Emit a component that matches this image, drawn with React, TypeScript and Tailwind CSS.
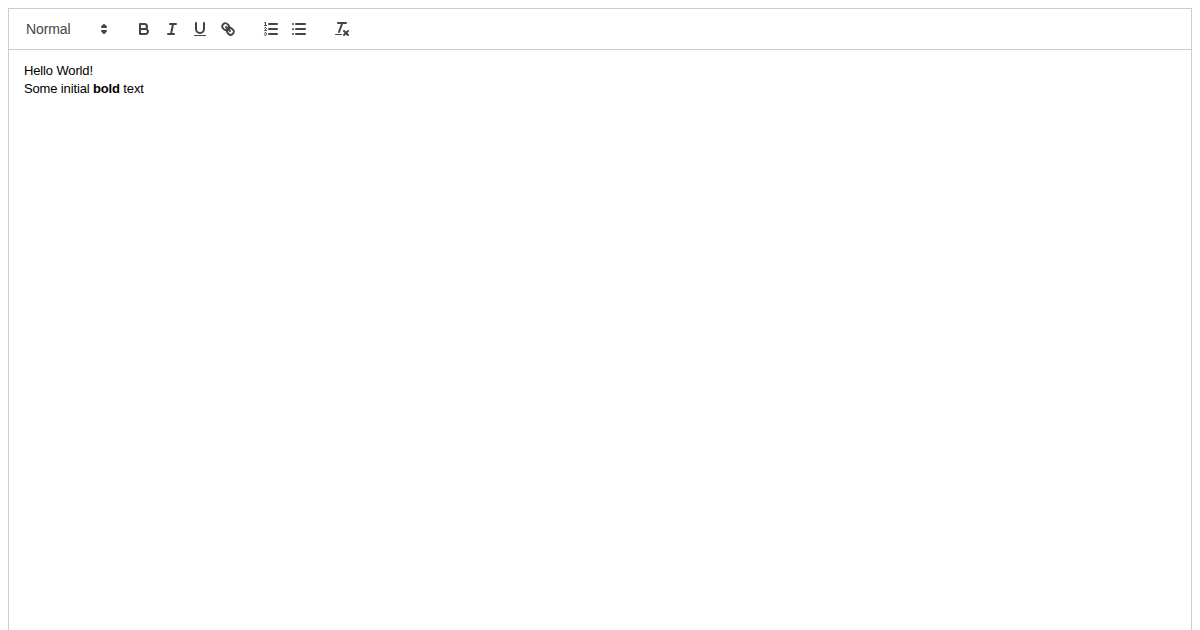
const stroke = {
  fill: 'none',
  stroke: '#444',
  strokeWidth: 2,
  strokeLinecap: 'round' as const,
  strokeLinejoin: 'round' as const,
};
const thin = { ...stroke, strokeWidth: 1 };

const ToolButton = ({ children }: { children: React.ReactNode }) => (
  <button className="w-[28px] h-[24px] px-[5px] py-[3px] flex items-center justify-center">
    <svg viewBox="0 0 18 18" className="w-[18px] h-[18px]">
      {children}
    </svg>
  </button>
);

const App = () => {
  return (
    <div className="p-2 bg-white min-h-screen" style={{ fontFamily: '"Liberation Sans", Helvetica, Arial, sans-serif' }}>
      <div className="border border-[#ccc] flex flex-col">
        {/* Toolbar */}
        <div className="flex items-center p-2 border-b border-[#ccc]">
          <div className="w-[98px] h-[24px] mr-[15px] relative text-[14px] font-medium text-[#444] tracking-[-0.1px]">
            <span className="absolute left-0 top-0 h-[24px] pl-[9px] leading-[24px]">Normal</span>
            <svg viewBox="0 0 18 18" className="absolute right-[2px] top-[3px] w-[18px] h-[18px]">
              <polygon points="7 11 9 13 11 11 7 11" {...stroke} />
              <polygon points="7 7 9 5 11 7 7 7" {...stroke} />
            </svg>
          </div>

          <div className="flex mr-[15px]">
            <ToolButton>
              <path {...stroke} d="M5,4H9.5A2.5,2.5,0,0,1,12,6.5v0A2.5,2.5,0,0,1,9.5,9H5A0,0,0,0,1,5,9V4A0,0,0,0,1,5,4Z" />
              <path {...stroke} d="M5,9h5.5A2.5,2.5,0,0,1,13,11.5v0A2.5,2.5,0,0,1,10.5,14H5a0,0,0,0,1,0,0V9A0,0,0,0,1,5,9Z" />
            </ToolButton>
            <ToolButton>
              <line {...stroke} x1="7" x2="13" y1="4" y2="4" />
              <line {...stroke} x1="5" x2="11" y1="14" y2="14" />
              <line {...stroke} x1="8" x2="10" y1="14" y2="4" />
            </ToolButton>
            <ToolButton>
              <path {...stroke} d="M5,3V9a4.012,4.012,0,0,0,4,4H9a4.012,4.012,0,0,0,4-4V3" />
              <rect fill="#444" height="1" rx="0.5" ry="0.5" width="12" x="3" y="15" />
            </ToolButton>
            <ToolButton>
              <line {...stroke} x1="7" x2="11" y1="7" y2="11" />
              <path {...stroke} d="M8.9,4.577a3.476,3.476,0,0,1,.36,4.679A3.476,3.476,0,0,1,4.577,8.9C3.185,7.5,2.035,6.4,4.217,4.217S7.5,3.185,8.9,4.577Z" />
              <path {...stroke} d="M13.423,9.1a3.476,3.476,0,0,0-4.679-.36,3.476,3.476,0,0,0,.36,4.679c1.392,1.392,2.5,2.542,4.679.36S14.815,10.5,13.423,9.1Z" />
            </ToolButton>
          </div>

          <div className="flex mr-[15px]">
            <ToolButton>
              <line {...stroke} x1="7" x2="15" y1="4" y2="4" />
              <line {...stroke} x1="7" x2="15" y1="9" y2="9" />
              <line {...stroke} x1="7" x2="15" y1="14" y2="14" />
              <line {...thin} x1="2.5" x2="4.5" y1="5.5" y2="5.5" />
              <path fill="#444" d="M3.5,6A0.5,0.5,0,0,1,3,5.5V3.085l-0.276.138A0.5,0.5,0,0,1,2.053,3c-0.124-.247-0.023-0.324.224-0.447l1-.5A0.5,0.5,0,0,1,4,2.5v3A0.5,0.5,0,0,1,3.5,6Z" />
              <path {...thin} d="M4.5,10.5h-2c0-.234,1.85-1.076,1.850-2.234A0.959,0.959,0,0,0,2.5,8.156" />
              <path {...thin} d="M2.5,14.846a0.959,0.959,0,0,0,1.85-.109A0.7,0.7,0,0,0,3.75,14a0.688,0.688,0,0,0,.6-0.736,0.959,0.959,0,0,0-1.85-.109" />
            </ToolButton>
            <ToolButton>
              <line {...stroke} x1="6" x2="15" y1="4" y2="4" />
              <line {...stroke} x1="6" x2="15" y1="9" y2="9" />
              <line {...stroke} x1="6" x2="15" y1="14" y2="14" />
              <line {...stroke} x1="3" x2="3" y1="4" y2="4" />
              <line {...stroke} x1="3" x2="3" y1="9" y2="9" />
              <line {...stroke} x1="3" x2="3" y1="14" y2="14" />
            </ToolButton>
          </div>

          <div className="flex">
            <ToolButton>
              <line {...stroke} x1="5" x2="13" y1="3" y2="3" />
              <line {...stroke} x1="6" x2="9.35" y1="12" y2="3" />
              <line {...stroke} x1="11" x2="15" y1="11" y2="15" />
              <line {...stroke} x1="15" x2="11" y1="11" y2="15" />
              <rect fill="#444" height="1" rx="0.5" ry="0.5" width="7" x="2" y="14" />
            </ToolButton>
          </div>
        </div>

        {/* Editor */}
        <div className="h-[700px] px-[15px] py-[12px] text-[13px] leading-[1.42] text-black tracking-[-0.14px]">
          <p>Hello World!</p>
          <p>
            Some initial <strong className="font-bold">bold</strong> text
          </p>
        </div>
      </div>
    </div>
  );
};

export default App;
